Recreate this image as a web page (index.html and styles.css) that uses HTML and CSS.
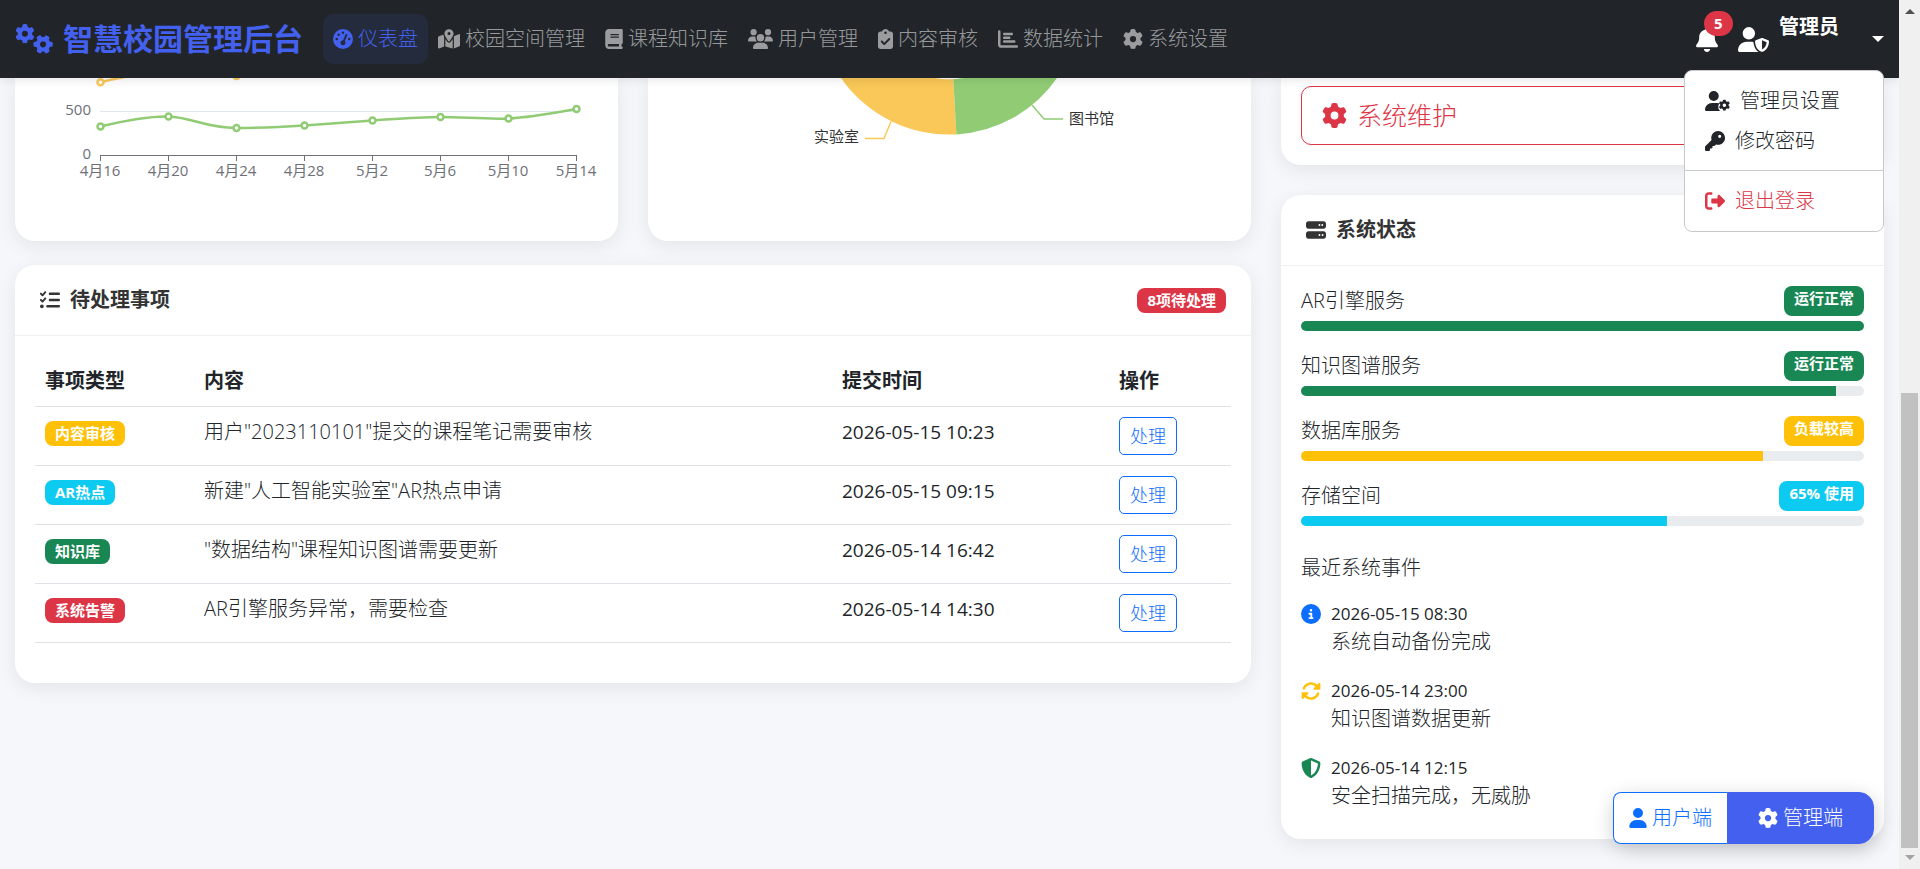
FILE: index.html
```html
<!DOCTYPE html>
<html lang="zh-CN">
<head>
  <meta charset="UTF-8">
  <meta name="viewport" content="width=device-width, initial-scale=1.0">
  <title>智慧校园管理后台</title>
  <link rel="stylesheet" href="styles.css">
</head>
<body>
  <!-- icon set -->
  <svg class="sprite" aria-hidden="true">
    <symbol id="gear" viewBox="0 0 512 512"><path d="M495.9 166.6c3.2 8.7 .5 18.4-6.4 24.6l-43.3 39.4c1.1 8.3 1.7 16.8 1.7 25.4s-.6 17.1-1.7 25.4l43.3 39.4c6.9 6.2 9.6 15.9 6.4 24.6c-4.4 11.9-9.7 23.3-15.8 34.3l-4.7 8.1c-6.6 11-14 21.4-22.1 31.2c-5.9 7.2-15.7 9.6-24.5 6.8l-55.7-17.7c-13.4 10.3-28.2 18.9-44 25.4l-12.5 57.1c-2 9.1-9 16.3-18.2 17.8c-13.8 2.3-28 3.5-42.5 3.5s-28.7-1.2-42.5-3.5c-9.2-1.5-16.2-8.7-18.2-17.8l-12.5-57.1c-15.8-6.5-30.6-15.1-44-25.4L83.1 425.9c-8.8 2.8-18.6 .3-24.5-6.8c-8.1-9.8-15.5-20.2-22.1-31.2l-4.7-8.1c-6.1-11-11.4-22.4-15.8-34.3c-3.2-8.7-.5-18.4 6.4-24.6l43.3-39.4C64.6 273.1 64 264.6 64 256s.6-17.1 1.7-25.4L22.4 191.2c-6.9-6.2-9.6-15.9-6.4-24.6c4.4-11.9 9.7-23.3 15.8-34.3l4.7-8.1c6.6-11 14-21.4 22.1-31.2c5.9-7.2 15.7-9.6 24.5-6.8l55.7 17.7c13.4-10.3 28.2-18.9 44-25.4l12.5-57.1c2-9.1 9-16.3 18.2-17.8C227.3 1.2 241.5 0 256 0s28.7 1.2 42.5 3.5c9.2 1.5 16.2 8.7 18.2 17.8l12.5 57.1c15.8 6.5 30.6 15.1 44 25.4l55.7-17.7c8.8-2.8 18.6-.3 24.5 6.8c8.1 9.8 15.5 20.2 22.1 31.2l4.7 8.1c6.1 11 11.4 22.4 15.8 34.3zM256 336a80 80 0 1 0 0-160 80 80 0 1 0 0 160z"/></symbol>
    <symbol id="gauge" viewBox="0 0 512 512"><path d="M0 256a256 256 0 1 1 512 0A256 256 0 1 1 0 256zM288 96a32 32 0 1 0 -64 0 32 32 0 1 0 64 0zM256 416c35.3 0 64-28.7 64-64c0-17.4-6.9-33.1-18.1-44.6L366 161.7c5.3-12.1-.2-26.3-12.3-31.6s-26.3 .2-31.6 12.3L257.9 288c-.6 0-1.3 0-1.9 0c-35.3 0-64 28.7-64 64s28.7 64 64 64zM176 144a32 32 0 1 0 -64 0 32 32 0 1 0 64 0zM96 288a32 32 0 1 0 0-64 32 32 0 1 0 0 64zm352-32a32 32 0 1 0 -64 0 32 32 0 1 0 64 0z"/></symbol>
    <symbol id="map" viewBox="0 0 576 512"><path d="M408 120c0 54.6-73.1 151.9-105.2 192c-7.7 9.6-22 9.6-29.6 0C241.1 271.9 168 174.6 168 120C168 53.7 221.7 0 288 0s120 53.7 120 120zm8 80.4c3.5-6.9 6.7-13.8 9.6-20.6c.5-1.2 1-2.5 1.5-3.7l116-46.4C558.9 123.4 576 135 576 152V422.8c0 9.8-6 18.6-15.1 22.3L416 503V200.4zM137.6 138.3c2.4 14.1 7.2 28.3 12.8 41.5c2.9 6.8 6.1 13.7 9.6 20.6V451.8L32.9 502.7C17.1 509 0 497.4 0 480.4V209.6c0-9.8 6-18.6 15.1-22.3l122.6-49zM327.8 332c13.9-17.4 35.7-45.7 56.2-77V504.3L192 449.4V255c20.5 31.3 42.3 59.6 56.2 77c20.5 25.6 59.1 25.6 79.6 0zM288 152a40 40 0 1 0 0-80 40 40 0 1 0 0 80z"/></symbol>
    <symbol id="book" viewBox="0 0 448 512"><path d="M96 0C43 0 0 43 0 96V416c0 53 43 96 96 96H384h32c17.7 0 32-14.3 32-32s-14.3-32-32-32V384c17.7 0 32-14.3 32-32V32c0-17.7-14.3-32-32-32H384 96zm0 384H352v64H96c-17.7 0-32-14.3-32-32s14.3-32 32-32zm32-240c0-8.8 7.2-16 16-16H336c8.8 0 16 7.2 16 16s-7.2 16-16 16H144c-8.8 0-16-7.2-16-16zm16 48H336c8.8 0 16 7.2 16 16s-7.2 16-16 16H144c-8.8 0-16-7.2-16-16s7.2-16 16-16z"/></symbol>
    <symbol id="users" viewBox="0 0 640 512"><path d="M144 0a80 80 0 1 1 0 160A80 80 0 1 1 144 0zM512 0a80 80 0 1 1 0 160A80 80 0 1 1 512 0zM0 298.7C0 239.8 47.8 192 106.7 192h42.7c15.9 0 31 3.5 44.6 9.7c-1.3 7.2-1.9 14.7-1.9 22.3c0 38.2 16.8 72.5 43.3 96c-.2 0-.4 0-.7 0H21.3C9.6 320 0 310.4 0 298.7zM405.3 320c-.2 0-.4 0-.7 0c26.6-23.5 43.3-57.8 43.3-96c0-7.6-.7-15-1.9-22.3c13.6-6.3 28.7-9.7 44.6-9.7h42.7C592.2 192 640 239.8 640 298.7c0 11.8-9.6 21.3-21.3 21.3H405.3zM224 224a96 96 0 1 1 192 0 96 96 0 1 1 -192 0zM128 485.3C128 411.7 187.7 352 261.3 352H378.7C452.3 352 512 411.7 512 485.3c0 14.7-11.9 26.7-26.7 26.7H154.7c-14.7 0-26.7-11.9-26.7-26.7z"/></symbol>
    <symbol id="clipboard" viewBox="0 0 384 512"><path d="M192 0c-41.8 0-77.4 26.7-90.5 64H64C28.7 64 0 92.7 0 128V448c0 35.3 28.7 64 64 64H320c35.3 0 64-28.7 64-64V128c0-35.3-28.7-64-64-64H282.5C269.4 26.7 233.8 0 192 0zm0 64a32 32 0 1 1 0 64 32 32 0 1 1 0-64zM305 273L177 401c-9.4 9.4-24.6 9.4-33.9 0L79 337c-9.4-9.4-9.4-24.6 0-33.9s24.6-9.4 33.9 0l47 47L271 239c9.4-9.4 24.6-9.4 33.9 0s9.4 24.6 0 33.9z"/></symbol>
    <symbol id="chart" viewBox="0 0 512 512"><path d="M32 32c17.7 0 32 14.3 32 32V400c0 8.8 7.2 16 16 16H480c17.7 0 32 14.3 32 32s-14.3 32-32 32H80c-44.2 0-80-35.8-80-80V64C0 46.3 14.3 32 32 32zm96 96c0-17.7 14.3-32 32-32l192 0c17.7 0 32 14.3 32 32s-14.3 32-32 32H160c-17.7 0-32-14.3-32-32zm32 64H288c17.7 0 32 14.3 32 32s-14.3 32-32 32H160c-17.7 0-32-14.3-32-32s14.3-32 32-32zm0 96H416c17.7 0 32 14.3 32 32s-14.3 32-32 32H160c-17.7 0-32-14.3-32-32s14.3-32 32-32z"/></symbol>
    <symbol id="bell" viewBox="0 0 448 512"><path d="M224 0c-17.7 0-32 14.3-32 32V51.2C119 66 64 130.6 64 208v18.8c0 47-17.3 92.4-48.5 127.6l-7.4 8.3c-8.4 9.4-10.4 22.9-5.3 34.4S19.4 416 32 416H416c12.6 0 24-7.4 29.2-18.9s3.1-25-5.3-34.4l-7.4-8.3C401.3 319.2 384 273.9 384 226.8V208c0-77.4-55-142-128-156.8V32c0-17.7-14.3-32-32-32zm45.3 493.3c12-12 18.7-28.3 18.7-45.3H160c0 17 6.7 33.3 18.7 45.3s28.3 18.7 45.3 18.7s33.3-6.7 45.3-18.7z"/></symbol>
    <symbol id="user-shield" viewBox="0 0 640 512"><path d="M224 256A128 128 0 1 0 224 0a128 128 0 1 0 0 256zm-45.7 48C79.8 304 0 383.8 0 482.3C0 498.7 13.3 512 29.7 512H418.3c1.8 0 3.5-.2 5.3-.5c-76.3-55.1-99.8-141-103.1-200.2c-16.1-4.8-33.1-7.3-50.7-7.3H178.3zm308.8-78.3l-120 48C358 277.4 352 286.2 352 296c0 63.3 25.9 168.8 134.8 214.2c5.9 2.5 12.6 2.5 18.5 0C614.1 464.8 640 359.3 640 296c0-9.8-6-18.6-15.1-22.3l-120-48c-5.7-2.3-12.1-2.3-17.8 0zM591.4 312c-3.9 50.7-27.2 116.7-95.4 149.7V273.8L591.4 312z"/></symbol>
    <symbol id="user-gear" viewBox="0 0 640 512"><path d="M224 256A128 128 0 1 0 224 0a128 128 0 1 0 0 256zM178.3 304C79.8 304 0 383.8 0 482.3C0 498.7 13.3 512 29.7 512H392c-34-28-52-62-52-104c0-38 12-68 30-90c-30-11-60-14-100-14z"/><use href="#gear" x="352" y="218" width="288" height="288"/></symbol>
    <symbol id="user" viewBox="0 0 448 512"><path d="M224 256A128 128 0 1 0 224 0a128 128 0 1 0 0 256zm-45.7 48C79.8 304 0 383.8 0 482.3C0 498.7 13.3 512 29.7 512H418.3c16.4 0 29.7-13.3 29.7-29.7C448 383.8 368.2 304 269.7 304H178.3z"/></symbol>
    <symbol id="key" viewBox="0 0 512 512"><path d="M336 352c97.2 0 176-78.8 176-176S433.2 0 336 0S160 78.8 160 176c0 18.7 2.9 36.8 8.3 53.7L7 391c-4.5 4.5-7 10.6-7 17v80c0 13.3 10.7 24 24 24h80c13.3 0 24-10.7 24-24V448h40c13.3 0 24-10.7 24-24V384h40c6.4 0 12.5-2.5 17-7l33.3-33.3c16.9 5.4 35 8.3 53.7 8.3zM376 96a40 40 0 1 1 0 80 40 40 0 1 1 0-80z"/></symbol>
    <symbol id="sign-out" viewBox="0 0 512 512"><path d="M377.9 105.9L500.7 228.7c7.2 7.2 11.3 17.1 11.3 27.3s-4.1 20.1-11.3 27.3L377.9 406.1c-6.4 6.4-15 9.9-24 9.9c-18.7 0-33.9-15.2-33.9-33.9l0-62.1-128 0c-17.7 0-32-14.3-32-32l0-64c0-17.7 14.3-32 32-32l128 0 0-62.1c0-18.7 15.2-33.9 33.9-33.9c9 0 17.6 3.6 24 9.9zM160 96L96 96c-17.7 0-32 14.3-32 32l0 256c0 17.7 14.3 32 32 32l64 0c17.7 0 32 14.3 32 32s-14.3 32-32 32l-64 0c-53 0-96-43-96-96L0 128C0 75 43 32 96 32l64 0c17.7 0 32 14.3 32 32s-14.3 32-32 32z"/></symbol>
    <symbol id="tasks" viewBox="0 0 512 512"><path d="M152.1 38.2c9.9 8.9 10.7 24 1.8 33.9l-72 80c-4.4 4.9-10.6 7.8-17.2 7.9s-12.9-2.4-17.6-7L7 113C-2.3 103.6-2.3 88.4 7 79s24.6-9.4 33.9 0l22.1 22.1 55.1-61.2c8.9-9.9 24-10.7 33.9-1.8zm0 160c9.9 8.9 10.7 24 1.8 33.9l-72 80c-4.4 4.9-10.6 7.8-17.2 7.9s-12.9-2.4-17.6-7L7 273c-9.4-9.4-9.4-24.6 0-33.9s24.6-9.4 33.9 0l22.1 22.1 55.1-61.2c8.9-9.9 24-10.7 33.9-1.8zM224 96c0-17.7 14.3-32 32-32H480c17.7 0 32 14.3 32 32s-14.3 32-32 32H256c-17.7 0-32-14.3-32-32zm0 160c0-17.7 14.3-32 32-32H480c17.7 0 32 14.3 32 32s-14.3 32-32 32H256c-17.7 0-32-14.3-32-32zM160 416c0-17.7 14.3-32 32-32H480c17.7 0 32 14.3 32 32s-14.3 32-32 32H192c-17.7 0-32-14.3-32-32zM48 368a48 48 0 1 1 0 96 48 48 0 1 1 0-96z"/></symbol>
    <symbol id="server" viewBox="0 0 512 512"><path d="M64 32C28.7 32 0 60.7 0 96v64c0 35.3 28.7 64 64 64H448c35.3 0 64-28.7 64-64V96c0-35.3-28.7-64-64-64H64zm280 72a24 24 0 1 1 0 48 24 24 0 1 1 0-48zm48 24a24 24 0 1 1 48 0 24 24 0 1 1 -48 0zM64 288c-35.3 0-64 28.7-64 64v64c0 35.3 28.7 64 64 64H448c35.3 0 64-28.7 64-64V352c0-35.3-28.7-64-64-64H64zm280 72a24 24 0 1 1 0 48 24 24 0 1 1 0-48zm56 24a24 24 0 1 1 48 0 24 24 0 1 1 -48 0z"/></symbol>
    <symbol id="info" viewBox="0 0 512 512"><path d="M256 512A256 256 0 1 0 256 0a256 256 0 1 0 0 512zM216 336h24V272H216c-13.3 0-24-10.7-24-24s10.7-24 24-24h48c13.3 0 24 10.7 24 24v88h8c13.3 0 24 10.7 24 24s-10.7 24-24 24H216c-13.3 0-24-10.7-24-24s10.7-24 24-24zm40-208a32 32 0 1 1 0 64 32 32 0 1 1 0-64z"/></symbol>
    <symbol id="sync" viewBox="0 0 512 512"><path id="sync-arrow" d="M142.9 142.9c62.2-62.2 162.7-62.5 225.3-1L327 183c-6.9 6.9-8.9 17.2-5.2 26.2s12.5 14.8 22.2 14.8H463.5c0 0 0 0 0 0H472c13.3 0 24-10.7 24-24V72c0-9.7-5.8-18.5-14.8-22.2s-19.3-1.7-26.2 5.2L413.4 96.6c-87.6-86.5-228.7-86.2-315.8 1C73.2 122 55.6 150.7 44.8 181.4c-5.9 16.7 2.9 34.9 19.5 40.8s34.9-2.9 40.8-19.5c7.7-21.8 20.2-42.3 37.8-59.8z"/><use href="#sync-arrow" transform="rotate(180 256 256)"/></symbol>
    <symbol id="shield" viewBox="0 0 512 512"><path d="M256 0c4.6 0 9.2 1 13.4 2.9L457.7 82.8c22 9.3 38.4 31 38.3 57.2c-.5 99.2-41.3 280.7-213.6 363.2c-16.7 8-36.1 8-52.8 0C57.3 420.7 16.5 239.2 16 140c-.1-26.2 16.3-47.9 38.3-57.2L242.7 2.9C246.8 1 251.4 0 256 0zm0 66.8V444.8C394 378 431.1 230.1 432 141.4L256 66.8z"/></symbol>
    <symbol id="gears" viewBox="0 0 640 512"><use href="#gear" x="0" y="0" width="330" height="330"/><use href="#gear" x="310" y="182" width="330" height="330" transform="rotate(30 475 347)"/></symbol>
  </svg>

  <div class="screen">
    <div class="viewport">
      <header class="navbar">
        <a class="brand" href="#"><svg class="icon"><use href="#gears"/></svg>智慧校园管理后台</a>
        <nav class="nav">
          <a class="nav-link active" href="#"><svg class="icon"><use href="#gauge"/></svg>仪表盘</a>
          <a class="nav-link" href="#"><svg class="icon icon-map"><use href="#map"/></svg>校园空间管理</a>
          <a class="nav-link" href="#"><svg class="icon icon-book"><use href="#book"/></svg>课程知识库</a>
          <a class="nav-link" href="#"><svg class="icon icon-wide"><use href="#users"/></svg>用户管理</a>
          <a class="nav-link" href="#"><svg class="icon icon-narrow"><use href="#clipboard"/></svg>内容审核</a>
          <a class="nav-link" href="#"><svg class="icon"><use href="#chart"/></svg>数据统计</a>
          <a class="nav-link" href="#"><svg class="icon"><use href="#gear"/></svg>系统设置</a>
        </nav>
        <div class="navbar-right">
          <button class="bell" type="button" aria-label="通知">
            <svg class="icon"><use href="#bell"/></svg>
            <span class="bell-count">5</span>
          </button>
          <div class="user">
            <button class="user-toggle" type="button">
              <svg class="icon"><use href="#user-shield"/></svg>
              <span class="user-name">管理员</span>
              <span class="caret"></span>
            </button>
            <div class="user-menu">
              <a class="menu-item" href="#"><svg class="icon icon-wide"><use href="#user-gear"/></svg>管理员设置</a>
              <a class="menu-item" href="#"><svg class="icon"><use href="#key"/></svg>修改密码</a>
              <hr class="menu-divider">
              <a class="menu-item text-danger" href="#"><svg class="icon"><use href="#sign-out"/></svg>退出登录</a>
            </div>
          </div>
        </div>
      </header>

      <main class="content">
        <div class="main-col">
          <div class="chart-row">
            <section class="card card-scrolled">
              <svg class="chart" viewBox="0 0 603 163" role="img" aria-label="访问趋势">
                <path class="grid-line" d="M85 33.5H561"/>
                <path class="axis" d="M85 77.5H561.5M85.5 77v6M153.500 77v6M221.500 77v6M289.500 77v6M357.500 77v6M425.500 77v6M493.500 77v6M561.500 77v6"/>
                <path class="line-yellow" d="M85.500 4.300C98 1 108-1 122-3"/>
                <path class="line-green" d="M85.500 48.500C108 43 131 38 153.500 38.500C176 39 190 50 221.500 50C244 50 267 49 289.500 47.500C312 46 335 44 357.500 42.500C380 41 403 39 425.500 39C448 39 471 41.500 493.500 40.500C516 39.500 539 35 561.500 31"/>
                <g class="dots-yellow"><circle cx="85.500" cy="4.300" r="3"/><circle cx="221.500" cy="-2" r="3"/></g>
                <g class="dots-green">
                  <circle cx="85.500" cy="48.500" r="3"/><circle cx="153.500" cy="38.500" r="3"/><circle cx="221.500" cy="50" r="3"/><circle cx="289.500" cy="47.500" r="3"/>
                  <circle cx="357.500" cy="42.500" r="3"/><circle cx="425.500" cy="39" r="3"/><circle cx="493.500" cy="40.500" r="3"/><circle cx="561.500" cy="31" r="3"/>
                </g>
                <g class="axis-y"><text x="76" y="37">500</text><text x="76" y="81">0</text></g>
                <g class="axis-x">
                  <text x="85" y="98">4月16</text><text x="153" y="98">4月20</text><text x="221" y="98">4月24</text><text x="289" y="98">4月28</text>
                  <text x="357" y="98">5月2</text><text x="425" y="98">5月6</text><text x="493" y="98">5月10</text><text x="561" y="98">5月14</text>
                </g>
              </svg>
            </section>
            <section class="card card-scrolled">
              <svg class="chart" viewBox="0 0 603 163" role="img" aria-label="空间使用分布">
                <path fill="#ee6666" d="M189-8L195 2L210-8Z"/>
                <path fill="#fac858" d="M301-74.700L193 0A131.300 131.300 0 0 0 308.400 56.400Z"/>
                <path fill="#91cc75" d="M301-74.700L308.400 56.400A131.300 131.300 0 0 0 409 0Z"/>
                <circle fill="#fff" cx="301" cy="-74.700" r="76"/>
                <path class="leader" stroke="#fac858" d="M243 43.500L236 60.500H217"/>
                <path class="leader" stroke="#91cc75" d="M384 27L396 41H415"/>
                <g class="pie-label"><text x="166" y="64">实验室</text><text x="421" y="46">图书馆</text></g>
              </svg>
            </section>
          </div>

          <section class="card">
            <div class="card-header">
              <h2 class="card-title"><svg class="icon"><use href="#tasks"/></svg>待处理事项</h2>
              <span class="badge bg-danger">8项待处理</span>
            </div>
            <div class="card-body">
              <table class="table">
                <thead>
                  <tr><th class="col-type">事项类型</th><th>内容</th><th class="col-time">提交时间</th><th class="col-action">操作</th></tr>
                </thead>
                <tbody>
                  <tr>
                    <td><span class="badge bg-warning">内容审核</span></td>
                    <td>用户"2023110101"提交的课程笔记需要审核</td>
                    <td class="time">2026-05-15 10:23</td>
                    <td><button class="btn-sm" type="button">处理</button></td>
                  </tr>
                  <tr>
                    <td><span class="badge bg-info">AR热点</span></td>
                    <td>新建"人工智能实验室"AR热点申请</td>
                    <td class="time">2026-05-15 09:15</td>
                    <td><button class="btn-sm" type="button">处理</button></td>
                  </tr>
                  <tr>
                    <td><span class="badge bg-success">知识库</span></td>
                    <td>"数据结构"课程知识图谱需要更新</td>
                    <td class="time">2026-05-14 16:42</td>
                    <td><button class="btn-sm" type="button">处理</button></td>
                  </tr>
                  <tr>
                    <td><span class="badge bg-danger">系统告警</span></td>
                    <td>AR引擎服务异常，需要检查</td>
                    <td class="time">2026-05-14 14:30</td>
                    <td><button class="btn-sm" type="button">处理</button></td>
                  </tr>
                </tbody>
              </table>
            </div>
          </section>
        </div>

        <div class="side-col">
          <section class="card card-scrolled quick-actions">
            <button class="btn-maintain" type="button"><svg class="icon"><use href="#gear"/></svg>系统维护</button>
          </section>

          <section class="card">
            <div class="card-header">
              <h2 class="card-title"><svg class="icon"><use href="#server"/></svg>系统状态</h2>
            </div>
            <div class="card-body">
              <div class="status">
                <div class="status-row"><span>AR引擎服务</span><span class="badge bg-success">运行正常</span></div>
                <div class="progress"><div class="progress-bar bg-success" style="width: 100%"></div></div>
              </div>
              <div class="status">
                <div class="status-row"><span>知识图谱服务</span><span class="badge bg-success">运行正常</span></div>
                <div class="progress"><div class="progress-bar bg-success" style="width: 95%"></div></div>
              </div>
              <div class="status">
                <div class="status-row"><span>数据库服务</span><span class="badge bg-warning">负载较高</span></div>
                <div class="progress"><div class="progress-bar bg-warning" style="width: 82%"></div></div>
              </div>
              <div class="status">
                <div class="status-row"><span>存储空间</span><span class="badge bg-info">65% 使用</span></div>
                <div class="progress"><div class="progress-bar bg-info" style="width: 65%"></div></div>
              </div>

              <h3 class="events-title">最近系统事件</h3>
              <ul class="events">
                <li class="event">
                  <svg class="icon text-primary"><use href="#info"/></svg>
                  <div><div class="event-time">2026-05-15 08:30</div><div>系统自动备份完成</div></div>
                </li>
                <li class="event">
                  <svg class="icon text-warning"><use href="#sync"/></svg>
                  <div><div class="event-time">2026-05-14 23:00</div><div>知识图谱数据更新</div></div>
                </li>
                <li class="event">
                  <svg class="icon text-success"><use href="#shield"/></svg>
                  <div><div class="event-time">2026-05-14 12:15</div><div>安全扫描完成，无威胁</div></div>
                </li>
              </ul>
            </div>
          </section>
        </div>
      </main>

      <div class="switcher">
        <button class="switch-user" type="button"><svg class="icon icon-book"><use href="#user"/></svg>用户端</button>
        <button class="switch-admin" type="button"><svg class="icon"><use href="#gear"/></svg>管理端</button>
      </div>
    </div>

    <div class="scrollbar" aria-hidden="true">
      <span class="scroll-up"></span>
      <div class="scroll-track"><div class="scroll-thumb"></div></div>
      <span class="scroll-down"></span>
    </div>
  </div>
</body>
</html>
```

FILE: styles.css
```css
* {
  box-sizing: border-box;
}

body {
  margin: 0;
  font-family: "Open Sans", "Noto Sans CJK SC", sans-serif;
  font-size: 20px;
  font-weight: 300;
  line-height: 30px;
  color: #212529;
  background-color: #f5f7fb;
}

button {
  font: inherit;
  cursor: pointer;
}

a {
  text-decoration: none;
}

.sprite {
  display: none;
}

.icon {
  width: 20px;
  height: 20px;
  fill: currentColor;
  flex: none;
}

.icon-map { width: 22px; }
.icon-book { width: 18px; }
.icon-wide { width: 25px; }
.icon-narrow { width: 15px; }

.screen {
  display: flex;
  height: 100vh;
  overflow: hidden;
}

.viewport {
  flex: 1;
  min-width: 0;
  position: relative;
  overflow: hidden;
}

/* navbar */
.navbar {
  position: relative;
  z-index: 10;
  display: flex;
  align-items: center;
  height: 78px;
  padding: 0 15px;
  background-color: #212529;
  box-shadow: 0 2px 10px rgba(0, 0, 0, 0.1);
}

.brand {
  display: flex;
  align-items: center;
  gap: 10px;
  margin-right: 20px;
  font-size: 30px;
  font-weight: bold;
  color: #4361ee;
  white-space: nowrap;
}

.brand .icon {
  width: 38px;
  height: 30px;
}

.nav {
  display: flex;
}

.nav-link {
  display: flex;
  align-items: center;
  gap: 5px;
  padding: 10px;
  border-radius: 10px;
  color: rgba(255, 255, 255, 0.55);
  white-space: nowrap;
}

.nav-link.active {
  color: #4361ee;
  background-color: rgba(67, 97, 238, 0.1);
}

.navbar-right {
  display: flex;
  align-items: center;
  gap: 20px;
  margin-left: auto;
}

.bell, .user-toggle {
  display: flex;
  align-items: center;
  padding: 0;
  border: none;
  background: none;
  color: #fff;
}

.bell {
  position: relative;
}

.bell .icon {
  width: 22px;
  height: 25px;
}

.bell-count {
  position: absolute;
  top: -16px;
  left: 8px;
  padding: 5px 10px;
  border-radius: 25px;
  background-color: #dc3545;
  font-size: 15px;
  font-weight: bold;
  line-height: 15px;
}

.user {
  position: relative;
}

.user-toggle .icon {
  width: 31px;
  height: 25px;
  margin-right: 10px;
}

.user-name {
  width: 88px;
  padding-bottom: 25px;
  font-weight: bold;
  text-align: left;
}

.caret {
  margin-left: 5px;
  border-top: 6px solid #fff;
  border-left: 6px solid transparent;
  border-right: 6px solid transparent;
}

.user-menu {
  position: absolute;
  top: 100%;
  right: 0;
  width: 200px;
  margin-top: 3px;
  padding: 10px 0;
  background-color: #fff;
  border: 1px solid #c8c9ca;
  border-radius: 8px;
}

.menu-item {
  display: flex;
  align-items: center;
  gap: 10px;
  padding: 5px 20px;
  color: #212529;
}

.menu-item.text-danger {
  color: #dc3545;
}

.menu-divider {
  margin: 9px 0 10px;
  border: none;
  border-top: 1px solid #c8c9ca;
}

/* layout */
.content {
  display: grid;
  grid-template-columns: repeat(3, 1fr);
  gap: 30px;
  align-items: start;
  padding: 0 15px 30px;
}

.main-col {
  grid-column: span 2;
  display: grid;
  gap: 24px;
}

.side-col {
  display: grid;
  gap: 30px;
}

.chart-row {
  display: grid;
  grid-template-columns: repeat(2, 1fr);
  gap: 30px;
}

/* cards */
.card {
  background-color: #fff;
  border-radius: 20px;
  box-shadow: 0 5px 20px rgba(0, 0, 0, 0.08);
}

.card-scrolled {
  border-radius: 0 0 20px 20px;
}

.card-header {
  display: flex;
  justify-content: space-between;
  align-items: center;
  padding: 20px 25px;
  border-bottom: 1px solid #eff0f2;
}

.card-title {
  display: flex;
  align-items: center;
  gap: 10px;
  margin: 0;
  font-size: 20px;
  font-weight: bold;
  color: #333;
}

.card-body {
  padding: 20px;
}

.badge {
  display: inline-block;
  padding: 5px 10px;
  border-radius: 8px;
  font-size: 15px;
  font-weight: bold;
  line-height: 15px;
  color: #fff;
}

.bg-danger { background-color: #dc3545; }
.bg-warning { background-color: #ffc107; }
.bg-info { background-color: #0dcaf0; }
.bg-success { background-color: #198754; }

.text-primary { color: #0d6efd; }
.text-warning { color: #ffc107; }
.text-success { color: #198754; }

/* charts */
.chart {
  display: block;
  width: 100%;
  font-size: 15px;
  font-weight: normal;
}

.grid-line { stroke: #e0e6f1; }
.axis { stroke: #6e7079; fill: none; }
.line-green { stroke: #91cc75; stroke-width: 2.5; fill: none; }
.line-yellow { stroke: #fac858; stroke-width: 2.5; fill: none; }
.dots-green { stroke: #91cc75; stroke-width: 2.5; fill: #fff; }
.dots-yellow { stroke: #fac858; stroke-width: 2.5; fill: #fff; }
.leader { fill: none; stroke-width: 1.5; }
.axis-x { fill: #6e7079; text-anchor: middle; }
.axis-y { fill: #6e7079; text-anchor: end; }
.pie-label { fill: #333; }

/* pending table */
.table {
  width: 100%;
  margin-bottom: 20px;
  border-collapse: collapse;
  table-layout: fixed;
}

.table th, .table td {
  padding: 10px;
  text-align: left;
  vertical-align: top;
  border-bottom: 1px solid #dee2e6;
}

.col-type { width: 159px; }
.col-time { width: 277px; }
.col-action { width: 122px; }

.table .time {
  font-size: 19px;
  font-weight: normal;
}

.btn-sm {
  display: block;
  padding: 5px 10px;
  border: 1px solid #0d6efd;
  border-radius: 5px;
  background: none;
  font-size: 18px;
  line-height: 26px;
  color: #0d6efd;
}

/* quick actions */
.quick-actions {
  padding: 8px 20px 20px;
}

.btn-maintain {
  display: flex;
  align-items: center;
  gap: 10px;
  width: 100%;
  padding: 10px 20px;
  border: 1px solid #dc3545;
  border-radius: 10px;
  background: none;
  font-size: 25px;
  line-height: 37px;
  color: #dc3545;
}

.btn-maintain .icon {
  width: 25px;
  height: 25px;
}

/* system status */
.status {
  margin-bottom: 20px;
}

.status-row {
  display: flex;
  justify-content: space-between;
  margin-bottom: 5px;
}

.progress {
  height: 10px;
  border-radius: 5px;
  background-color: #e9ecef;
  overflow: hidden;
}

.progress-bar {
  height: 100%;
}

.events-title {
  margin: 30px 0 20px;
  font-size: 20px;
  font-weight: inherit;
  line-height: 24px;
}

.events {
  display: grid;
  gap: 20px;
  margin: 0 0 8px;
  padding: 0;
  list-style: none;
}

.event {
  display: flex;
  gap: 10px;
}

.event .icon {
  margin-top: 4px;
}

.event-time {
  font-size: 17px;
  font-weight: normal;
  line-height: 27px;
}

/* user / admin switch */
.switcher {
  position: absolute;
  right: 25px;
  bottom: 25px;
  display: flex;
  border-radius: 15px;
  box-shadow: 0 5px 20px rgba(0, 0, 0, 0.2);
}

.switch-user, .switch-admin {
  display: flex;
  align-items: center;
  gap: 5px;
  height: 52px;
  border: 1px solid #0d6efd;
}

.switch-user {
  padding: 0 15px;
  border-right: none;
  border-radius: 8px 0 0 8px;
  background-color: #fff;
  color: #0d6efd;
}

.switch-admin {
  padding: 0 30px;
  border-color: #4361ee;
  border-radius: 0 15px 15px 0;
  background-color: #4361ee;
  color: #fff;
}

/* scroll bar */
.scrollbar {
  display: flex;
  flex-direction: column;
  align-items: center;
  width: 21px;
  padding: 9px 0;
  background-color: #f0f0f0;
}

.scroll-up, .scroll-down {
  border-left: 5px solid transparent;
  border-right: 5px solid transparent;
}

.scroll-up { border-bottom: 5px solid #505050; }
.scroll-down { border-top: 5px solid #a3a3a3; }

.scroll-track {
  flex: 1;
  display: flex;
  flex-direction: column;
  justify-content: flex-end;
  width: 17px;
  padding: 7px 0;
}

.scroll-thumb {
  height: 55%;
  background-color: #c1c1c1;
}
```
